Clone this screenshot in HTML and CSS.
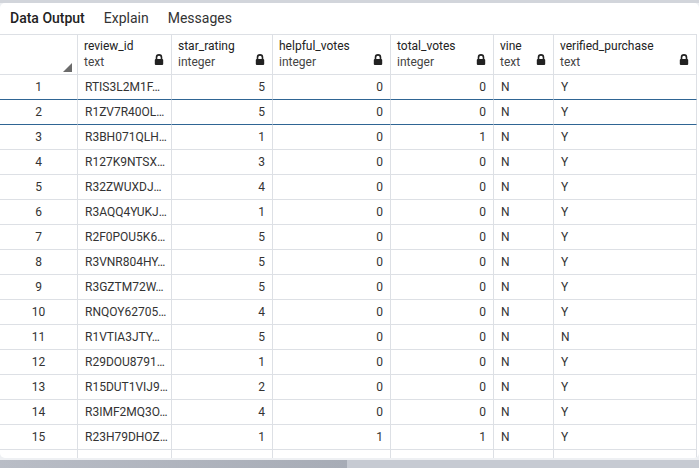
FILE: index.html
```html
<!DOCTYPE html>
<html>
<head>
<meta charset="utf-8">
<link rel="stylesheet" href="styles.css">
</head>
<body>
<div class="topstrip"></div>
<div class="panel">
  <div class="tabs">
    <span class="tab active">Data Output</span>
    <span class="tab">Explain</span>
    <span class="tab">Messages</span>
  </div>
  <table class="grid">
    <colgroup>
      <col class="c0"><col class="c1"><col class="c2"><col class="c3"><col class="c4"><col class="c5"><col class="c6">
    </colgroup>
    <thead>
      <tr>
        <th class="corner"><span class="resize"></span></th>
        <th><div class="hcell"><div class="hname"><div>review_id</div><div class="htype">text</div></div><svg class="lock" viewBox="0 0 10 11"><path d="M2.5 5V3.4A2.5 2.5 0 0 1 7.5 3.4V5" fill="none" stroke="#222" stroke-width="1.6"/><rect x="0.8" y="5" width="8.4" height="6" rx="1" fill="#222"/></svg></div></th>
        <th><div class="hcell"><div class="hname"><div>star_rating</div><div class="htype">integer</div></div><svg class="lock" viewBox="0 0 10 11"><path d="M2.5 5V3.4A2.5 2.5 0 0 1 7.5 3.4V5" fill="none" stroke="#222" stroke-width="1.6"/><rect x="0.8" y="5" width="8.4" height="6" rx="1" fill="#222"/></svg></div></th>
        <th><div class="hcell"><div class="hname"><div>helpful_votes</div><div class="htype">integer</div></div><svg class="lock" viewBox="0 0 10 11"><path d="M2.5 5V3.4A2.5 2.5 0 0 1 7.5 3.4V5" fill="none" stroke="#222" stroke-width="1.6"/><rect x="0.8" y="5" width="8.4" height="6" rx="1" fill="#222"/></svg></div></th>
        <th><div class="hcell"><div class="hname"><div>total_votes</div><div class="htype">integer</div></div><svg class="lock" viewBox="0 0 10 11"><path d="M2.5 5V3.4A2.5 2.5 0 0 1 7.5 3.4V5" fill="none" stroke="#222" stroke-width="1.6"/><rect x="0.8" y="5" width="8.4" height="6" rx="1" fill="#222"/></svg></div></th>
        <th><div class="hcell"><div class="hname"><div>vine</div><div class="htype">text</div></div><svg class="lock" viewBox="0 0 10 11"><path d="M2.5 5V3.4A2.5 2.5 0 0 1 7.5 3.4V5" fill="none" stroke="#222" stroke-width="1.6"/><rect x="0.8" y="5" width="8.4" height="6" rx="1" fill="#222"/></svg></div></th>
        <th><div class="hcell"><div class="hname"><div>verified_purchase</div><div class="htype">text</div></div><svg class="lock" viewBox="0 0 10 11"><path d="M2.5 5V3.4A2.5 2.5 0 0 1 7.5 3.4V5" fill="none" stroke="#222" stroke-width="1.6"/><rect x="0.8" y="5" width="8.4" height="6" rx="1" fill="#222"/></svg></div></th>
      </tr>
    </thead>
    <tbody>
      <tr class="presel"><td class="rn">1</td><td>RTIS3L2M1F…</td><td class="num">5</td><td class="num">0</td><td class="num">0</td><td>N</td><td>Y</td></tr>
      <tr class="sel"><td class="rn">2</td><td>R1ZV7R40OL…</td><td class="num">5</td><td class="num">0</td><td class="num">0</td><td>N</td><td>Y</td></tr>
      <tr><td class="rn">3</td><td>R3BH071QLH…</td><td class="num">1</td><td class="num">0</td><td class="num">1</td><td>N</td><td>Y</td></tr>
      <tr><td class="rn">4</td><td>R127K9NTSX…</td><td class="num">3</td><td class="num">0</td><td class="num">0</td><td>N</td><td>Y</td></tr>
      <tr><td class="rn">5</td><td>R32ZWUXDJ…</td><td class="num">4</td><td class="num">0</td><td class="num">0</td><td>N</td><td>Y</td></tr>
      <tr><td class="rn">6</td><td>R3AQQ4YUKJ…</td><td class="num">1</td><td class="num">0</td><td class="num">0</td><td>N</td><td>Y</td></tr>
      <tr><td class="rn">7</td><td>R2F0POU5K6…</td><td class="num">5</td><td class="num">0</td><td class="num">0</td><td>N</td><td>Y</td></tr>
      <tr><td class="rn">8</td><td>R3VNR804HY…</td><td class="num">5</td><td class="num">0</td><td class="num">0</td><td>N</td><td>Y</td></tr>
      <tr><td class="rn">9</td><td>R3GZTM72W…</td><td class="num">5</td><td class="num">0</td><td class="num">0</td><td>N</td><td>Y</td></tr>
      <tr><td class="rn">10</td><td>RNQOY62705…</td><td class="num">4</td><td class="num">0</td><td class="num">0</td><td>N</td><td>Y</td></tr>
      <tr><td class="rn">11</td><td>R1VTIA3JTY…</td><td class="num">5</td><td class="num">0</td><td class="num">0</td><td>N</td><td>N</td></tr>
      <tr><td class="rn">12</td><td>R29DOU8791…</td><td class="num">1</td><td class="num">0</td><td class="num">0</td><td>N</td><td>Y</td></tr>
      <tr><td class="rn">13</td><td>R15DUT1VIJ9…</td><td class="num">2</td><td class="num">0</td><td class="num">0</td><td>N</td><td>Y</td></tr>
      <tr><td class="rn">14</td><td>R3IMF2MQ3O…</td><td class="num">4</td><td class="num">0</td><td class="num">0</td><td>N</td><td>Y</td></tr>
      <tr><td class="rn">15</td><td>R23H79DHOZ…</td><td class="num">1</td><td class="num">1</td><td class="num">1</td><td>N</td><td>Y</td></tr>
      <tr class="partial"><td class="rn"></td><td></td><td></td><td></td><td></td><td></td><td></td></tr>
    </tbody>
  </table>
</div>
<div class="bottombar"><div class="bb-left"></div><div class="bb-right"></div></div>
</body>
</html>
```

FILE: styles.css
```css
html, body {
  margin: 0;
  padding: 0;
}
body {
  width: 699px;
  height: 468px;
  overflow: hidden;
  background: #eef0f3;
  font-family: Roboto, "Liberation Sans", sans-serif;
  display: flex;
  flex-direction: column;
}
.topstrip {
  height: 3px;
  background: #d2d5db;
  flex: none;
}
.panel {
  flex: none;
  height: 455px;
  background: #ffffff;
  border-radius: 5px;
  overflow: hidden;
}
.tabs {
  height: 31px;
  display: flex;
  align-items: center;
  padding-left: 10px;
  gap: 19px;
  box-sizing: border-box;
  padding-bottom: 1px;
}
.tab {
  font-size: 14px;
  color: #333;
}
.tab.active {
  font-weight: 500;
  color: #222;
}
.grid {
  border-collapse: separate;
  border-spacing: 0;
  table-layout: fixed;
  width: 697px;
  font-size: 12px;
  color: #333;
}
.c0 { width: 78px; }
.c1 { width: 94px; }
.c2 { width: 101px; }
.c3 { width: 118px; }
.c4 { width: 103px; }
.c5 { width: 60px; }
.c6 { width: 143px; }
.grid th {
  border-top: 1px solid #dde0e5;
  border-bottom: 1px solid #dde0e5;
  border-right: 1px solid #dde0e5;
  height: 39px;
  padding: 0;
  font-weight: 400;
  text-align: left;
  vertical-align: middle;
}
.corner {
  position: relative;
}
.resize {
  position: absolute;
  right: 5px;
  bottom: 2px;
  width: 0;
  height: 0;
  border-left: 9px solid transparent;
  border-bottom: 9px solid #6b6b6b;
}
.hcell {
  display: flex;
  align-items: center;
  justify-content: space-between;
  padding: 0 7px 0 6px;
}
.hname {
  line-height: 16px;
  color: #222;
  font-size: 12px;
  padding-bottom: 1px;
}
.htype {
  color: #444;
}
.lock {
  width: 10px;
  height: 11px;
  margin-top: 9px;
  flex: none;
}
.grid td {
  height: 24px;
  padding: 0 7px;
  border-bottom: 1px solid #dde0e5;
  border-right: 1px solid #dde0e5;
  white-space: nowrap;
  overflow: hidden;
  line-height: 24px;
}
.grid td.rn {
  text-align: center;
  padding: 0;
}
.grid td.num {
  text-align: right;
}
.grid tr.presel td,
.grid tr.sel td {
  border-bottom-color: #2f6594;
}
.grid tr.partial td {
  border-bottom: none;
}
.bottombar {
  flex: none;
  margin-top: 2px;
  height: 8px;
  display: flex;
}
.bb-left {
  width: 347px;
  background: linear-gradient(to right, #b9bdc6, #a7acb6);
}
.bb-right {
  flex: 1;
  background: #c6cad2;
}
```
